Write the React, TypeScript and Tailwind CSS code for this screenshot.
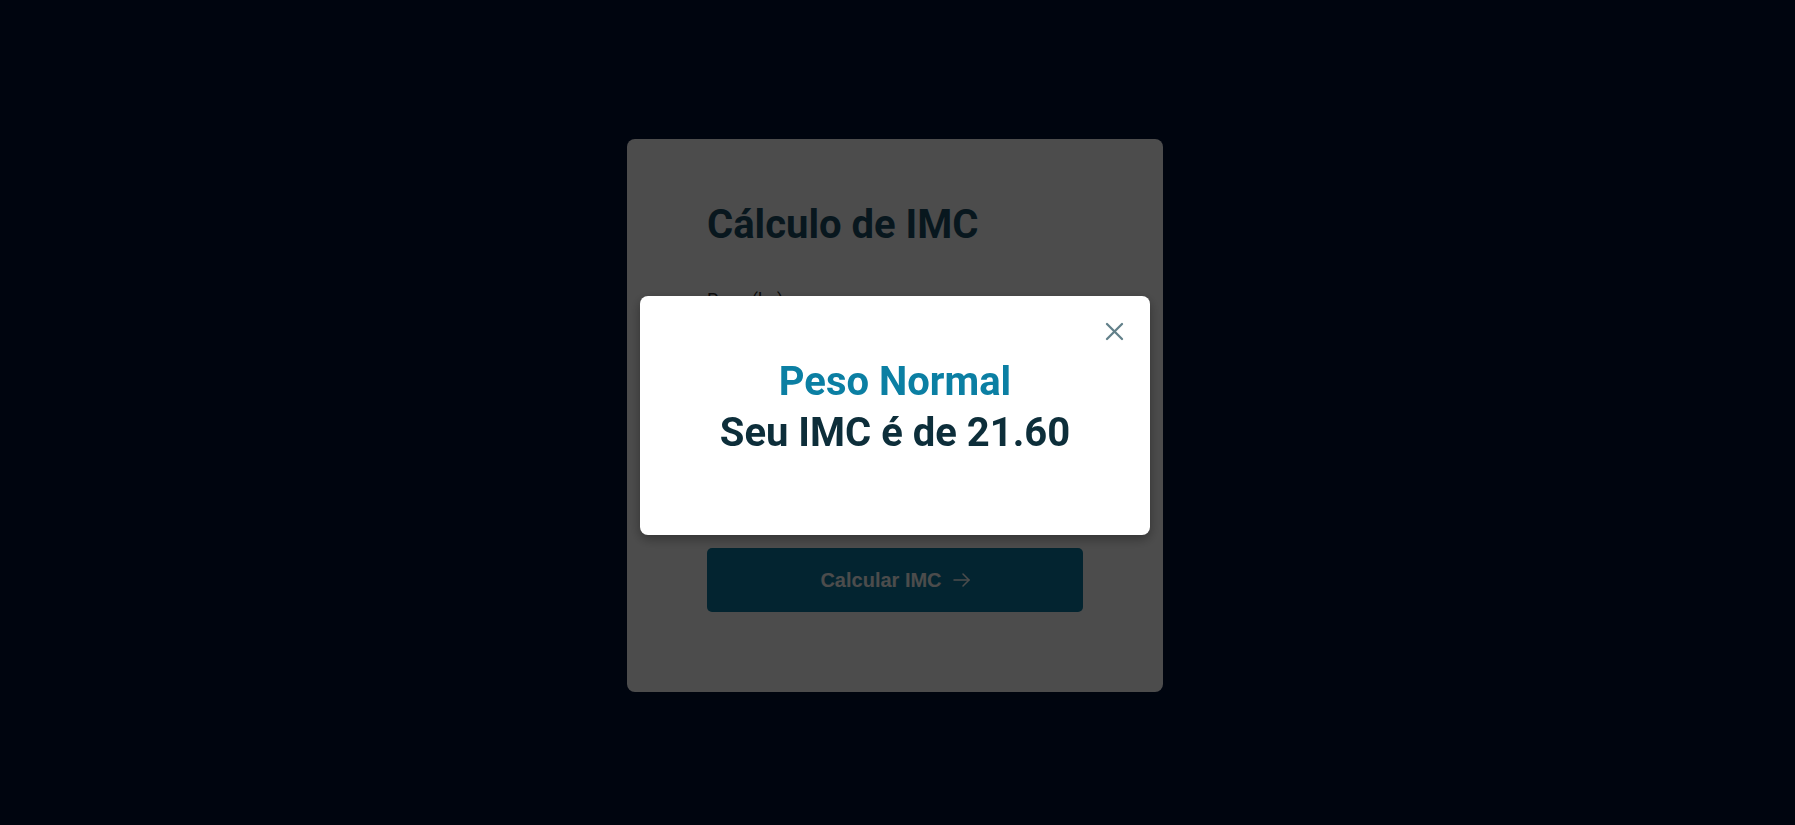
import React from "react";

function ArrowIcon() {
  return (
    <svg width="17" height="14" viewBox="0 0 17 14" fill="none" stroke="currentColor" strokeWidth="1.5" strokeLinecap="round" strokeLinejoin="round">
      <path d="M1 7H16" />
      <path d="M10 1L16 7L10 13" />
    </svg>
  );
}

function CloseIcon() {
  return (
    <svg width="19" height="19" viewBox="0 0 19 19" fill="none" stroke="currentColor" strokeWidth="2.3" strokeLinecap="round">
      <path d="M2 2L17 17" />
      <path d="M17 2L2 17" />
    </svg>
  );
}

export default function App() {
  return (
    <div className="relative min-h-screen w-full bg-[#001135] font-[family-name:Roboto,sans-serif]">
      <div className="flex min-h-screen w-full items-center justify-center pt-[5px] pr-[5px]">
        <div className="flex h-[553px] w-[536px] flex-col rounded-lg bg-white px-[80px] pt-[62px] pb-[80px]">
          <h1 className="text-[40px] leading-[47px] font-bold text-[#1d4f66]">Cálculo de IMC</h1>
          <label className="mt-[41px] block text-[18px] leading-[21px] text-[#2a2a2a]">Peso (kg)</label>
          <input
            className="mt-2 h-14 w-full rounded-[5px] border border-[#cfd8dc] px-4 text-[18px]"
            defaultValue="70"
          />
          <label className="mt-8 block text-[18px] leading-[21px] text-[#2a2a2a]">Altura (m)</label>
          <input
            className="mt-2 h-14 w-full rounded-[5px] border border-[#cfd8dc] px-4 text-[18px]"
            defaultValue="1.80"
          />
          <button className="mt-[57px] flex h-16 w-full items-center justify-center gap-[11px] rounded-[5px] bg-[#0a7aa0] font-[family-name:'Liberation_Sans',Arial,sans-serif] text-[20px] font-bold text-white">
            <span>Calcular IMC</span>
            <ArrowIcon />
          </button>
        </div>
      </div>

      <div className="fixed inset-0 flex items-center justify-center bg-black/70 pt-[5px] pr-[5px]">
        <div className="relative h-[239px] w-[510px] rounded-lg bg-white pt-[60px] text-center shadow-[0_4px_12px_rgba(0,0,0,0.35)]">
          <button className="absolute top-[26px] right-[26px] text-[#62808a]" aria-label="Fechar">
            <CloseIcon />
          </button>
          <p className="text-[40px] leading-[51px] font-bold text-[#0b7fa3]">Peso Normal</p>
          <p className="text-[40px] leading-[51px] font-bold text-[#0d2e3a]">Seu IMC é de 21.60</p>
        </div>
      </div>
    </div>
  );
}
